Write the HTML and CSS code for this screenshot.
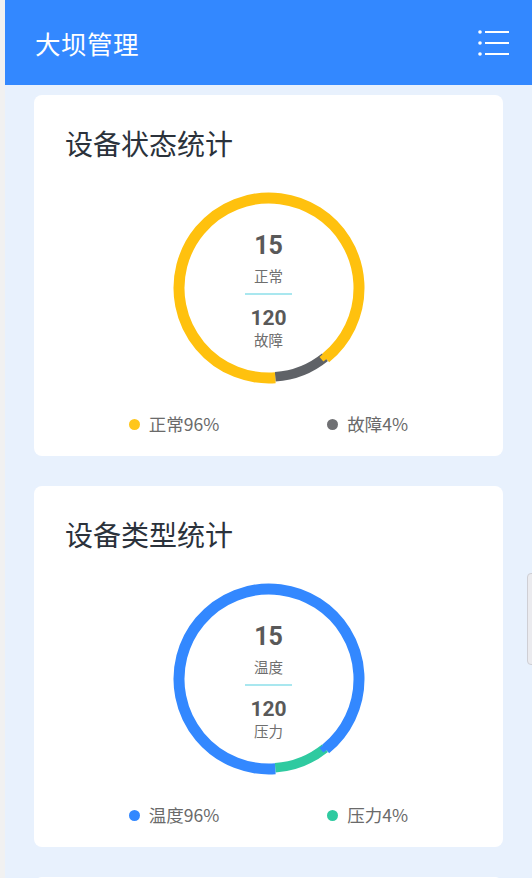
FILE: index.html
```html
<!DOCTYPE html>
<html lang="zh-CN">
<head>
<meta charset="utf-8">
<title>大坝管理</title>
<link rel="stylesheet" href="styles.css">
</head>
<body>
<div class="app">
  <header class="topbar">
    <h1 class="topbar-title">大坝管理</h1>
    <svg class="menu-icon" width="32" height="28" viewBox="0 0 32 28">
      <circle cx="2" cy="3" r="1.8" fill="#fff"/>
      <circle cx="2" cy="14" r="1.8" fill="#fff"/>
      <circle cx="2" cy="25" r="1.8" fill="#fff"/>
      <rect x="7" y="2" width="24" height="2" fill="#fff"/>
      <rect x="7" y="13" width="24" height="2" fill="#fff"/>
      <rect x="7" y="24" width="24" height="2" fill="#fff"/>
    </svg>
  </header>

  <main class="content">
    <section class="card">
      <h2 class="card-title">设备状态统计</h2>
      <div class="chart">
        <svg class="donut" width="200" height="200" viewBox="0 0 200 200">
          <path d="M 156.0 169.2 A 89 89 0 0 1 106.2 188.8" fill="none" stroke="#5f6267" stroke-width="9.5"/>
          <path d="M 106.28 189.78 A 90 90 0 1 1 156.64 169.94" fill="none" stroke="#ffc10e" stroke-width="11"/>
          <rect x="152" y="167" width="5" height="6" fill="#ffc10e" transform="rotate(-39 154 170)"/>
        </svg>
        <div class="center-text">
          <div class="num-big">15</div>
          <div class="label first">正常</div>
          <div class="divider"></div>
          <div class="num-small">120</div>
          <div class="label">故障</div>
        </div>
      </div>
      <div class="legend">
        <div class="legend-item"><span class="dot dot-yellow"></span>正常96%</div>
        <div class="legend-item"><span class="dot dot-gray"></span>故障4%</div>
      </div>
    </section>

    <section class="card">
      <h2 class="card-title">设备类型统计</h2>
      <div class="chart">
        <svg class="donut" width="200" height="200" viewBox="0 0 200 200">
          <path d="M 156.0 169.2 A 89 89 0 0 1 106.2 188.8" fill="none" stroke="#2fcaa0" stroke-width="9.5"/>
          <path d="M 106.28 189.78 A 90 90 0 1 1 156.64 169.94" fill="none" stroke="#3388ff" stroke-width="11"/>
          <rect x="152" y="167" width="5" height="6" fill="#3388ff" transform="rotate(-39 154 170)"/>
        </svg>
        <div class="center-text">
          <div class="num-big">15</div>
          <div class="label first">温度</div>
          <div class="divider"></div>
          <div class="num-small">120</div>
          <div class="label">压力</div>
        </div>
      </div>
      <div class="legend">
        <div class="legend-item"><span class="dot dot-blue"></span>温度96%</div>
        <div class="legend-item"><span class="dot dot-green"></span>压力4%</div>
      </div>
    </section>

    <section class="card card-next"></section>
  </main>

  <div class="side-handle"></div>
</div>
</body>
</html>
```

FILE: styles.css
```css
html {
  background: #f1f1f1;
}
body {
  margin: 0 0 0 5px;
  font-family: Roboto, "Noto Sans CJK SC", sans-serif;
  background: #e8f1fd;
  height: 878px;
  overflow: hidden;
}
.app {
  position: relative;
  min-height: 878px;
}
.topbar {
  height: 85px;
  background: #3388ff;
  display: flex;
  align-items: center;
  justify-content: space-between;
  padding: 0 22px 0 30px;
}
.topbar-title {
  margin: 0;
  color: #fff;
  font-family: "Noto Sans CJK SC", sans-serif;
  font-size: 25.5px;
  font-weight: 400;
  letter-spacing: 0.5px;
}
.menu-icon {
  display: block;
}
.content {
  padding: 10px 29px 0 29px;
  display: flex;
  flex-direction: column;
  gap: 30px;
}
.card {
  background: #fff;
  border-radius: 8px;
  height: 361px;
  box-sizing: border-box;
  padding: 28px 0 0 31px;
  display: flex;
  flex-direction: column;
}
.card-next {
  height: 200px;
}
.card-title {
  margin: 0;
  font-family: "Noto Sans CJK SC", sans-serif;
  font-size: 28px;
  font-weight: 400;
  line-height: 40px;
  color: #2b323b;
}
.chart {
  display: grid;
  width: 200px;
  height: 200px;
  margin: 25px 0 0 103.5px;
}
.donut,
.center-text {
  grid-area: 1 / 1;
}
.donut {
  display: block;
}
.center-text {
  display: flex;
  flex-direction: column;
  align-items: center;
  padding-top: 44px;
  color: #595959;
}
.num-big {
  font-family: Roboto, sans-serif;
  font-weight: 700;
  font-size: 25px;
  line-height: 28px;
}
.num-small {
  font-family: Roboto, sans-serif;
  font-weight: 700;
  font-size: 21px;
  line-height: 24px;
  margin-top: 11px;
}
.label {
  font-family: "Noto Sans CJK SC", sans-serif;
  font-size: 14.5px;
  line-height: 20px;
  color: #6e6e6e;
}
.label.first {
  margin-top: 6px;
}
.divider {
  width: 47px;
  height: 1.5px;
  background: #a9e7ef;
  margin-top: 7px;
}
.legend {
  display: flex;
  justify-content: center;
  gap: 108px;
  margin: 26px 0 0 -31px;
}
.legend-item {
  display: flex;
  align-items: center;
  font-family: "Noto Sans CJK SC", sans-serif;
  font-size: 17.5px;
  line-height: 20px;
  color: #6a6a6a;
}
.dot {
  width: 11px;
  height: 11px;
  border-radius: 50%;
  margin-right: 9px;
}
.dot-yellow { background: #ffc61a; }
.dot-gray { background: #6f7073; }
.dot-blue { background: #3388ff; }
.dot-green { background: #2fcaa0; }
.side-handle {
  position: absolute;
  left: 522px;
  top: 573px;
  width: 14px;
  height: 92px;
  box-sizing: border-box;
  background: #ebebef;
  border: 1px solid #cfcfd5;
  border-radius: 4px;
}
```
